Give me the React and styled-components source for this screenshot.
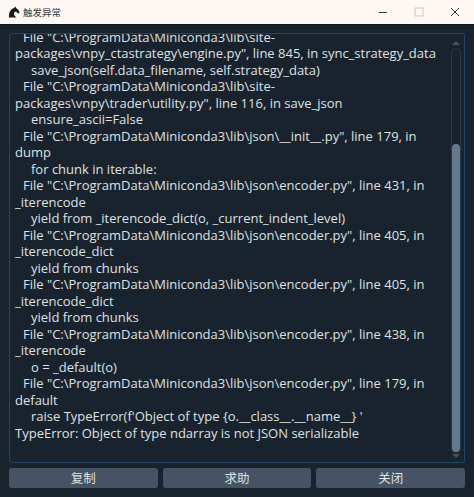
import React from 'react';
import styled, { createGlobalStyle } from 'styled-components';

const GlobalStyle = createGlobalStyle`
    html, body {
        margin: 0;
        padding: 0;
        background: #19232d;
    }
`;

const Window = styled.div`
    width: 474px;
    height: 497px;
    display: flex;
    flex-direction: column;
    background: #19232d;
    overflow: hidden;
`;

const TitleBar = styled.div`
    height: 24px;
    flex: none;
    display: flex;
    align-items: center;
    background: #fdf8f3;
    border-bottom: 1px solid #10161c;
    box-sizing: content-box;
    padding-left: 8px;
`;

const Title = styled.span`
    margin-left: 3px;
    font-family: "Noto Sans CJK SC", sans-serif;
    font-size: 9.5px;
    color: #333;
`;

const WinButtons = styled.div`
    margin-left: auto;
    display: flex;
    align-items: center;
    height: 100%;
    padding-right: 1px;
`;

const WinButton = styled.div`
    width: 36px;
    height: 24px;
    display: flex;
    align-items: center;
    justify-content: center;
`;

const Content = styled.div`
    flex: 1;
    min-height: 0;
    display: flex;
    flex-direction: column;
    gap: 5px;
    padding: 8px 9px 9px;
`;

const LogBox = styled.div`
    flex: 1;
    min-height: 0;
    display: flex;
    border: 1px solid #1f4766;
    border-radius: 3px;
    overflow: hidden;
`;

const LogText = styled.div`
    flex: 1;
    min-width: 0;
    margin-top: -5px;
    padding-left: 5px;
    font-family: "Open Sans", sans-serif;
    font-size: 13px;
    line-height: 16.48px;
    color: #dfe1e2;
    white-space: pre;
`;

const Line = styled.div`
    padding-left: ${p => p.$indent || 0}px;
`;

const ScrollBar = styled.div`
    width: 12px;
    flex: none;
    display: flex;
    flex-direction: column;
    align-items: center;
    padding: 7px 0 4px;
    margin-right: 2px;
`;

const Arrow = styled.div`
    width: 0;
    height: 0;
    flex: none;
    border-left: 4px solid transparent;
    border-right: 4px solid transparent;
    ${p => p.$down
        ? 'border-top: 4px solid #455364;'
        : 'border-bottom: 4px solid #455364;'}
`;

const Track = styled.div`
    flex: 1;
    width: 10px;
    margin: 3px 0 1px;
    display: flex;
    flex-direction: column;
    justify-content: flex-end;
    border: 1px solid #2b3a48;
    border-radius: 5px;
    box-sizing: border-box;
`;

const Thumb = styled.div`
    height: 308px;
    background: #60798b;
    border-radius: 4px;
`;

const ButtonRow = styled.div`
    flex: none;
    display: grid;
    grid-template-columns: repeat(3, 1fr);
    gap: 5px;
`;

const Button = styled.button`
    height: 20px;
    padding: 0;
    border: none;
    border-radius: 3px;
    background: #455364;
    color: #dfe1e2;
    font-family: "Noto Sans CJK SC", sans-serif;
    font-size: 12.5px;
    line-height: 20px;
`;

const lines = [
    ['File "C:\\ProgramData\\Miniconda3\\lib\\site-', 8],
    ['packages\\vnpy_ctastrategy\\engine.py", line 845, in sync_strategy_data', 0],
    ['save_json(self.data_filename, self.strategy_data)', 16],
    ['File "C:\\ProgramData\\Miniconda3\\lib\\site-', 8],
    ['packages\\vnpy\\trader\\utility.py", line 116, in save_json', 0],
    ['ensure_ascii=False', 16],
    ['File "C:\\ProgramData\\Miniconda3\\lib\\json\\__init__.py", line 179, in', 8],
    ['dump', 0],
    ['for chunk in iterable:', 16],
    ['File "C:\\ProgramData\\Miniconda3\\lib\\json\\encoder.py", line 431, in', 8],
    ['_iterencode', 0],
    ['yield from _iterencode_dict(o, _current_indent_level)', 16],
    ['File "C:\\ProgramData\\Miniconda3\\lib\\json\\encoder.py", line 405, in', 8],
    ['_iterencode_dict', 0],
    ['yield from chunks', 16],
    ['File "C:\\ProgramData\\Miniconda3\\lib\\json\\encoder.py", line 405, in', 8],
    ['_iterencode_dict', 0],
    ['yield from chunks', 16],
    ['File "C:\\ProgramData\\Miniconda3\\lib\\json\\encoder.py", line 438, in', 8],
    ['_iterencode', 0],
    ['o = _default(o)', 16],
    ['File "C:\\ProgramData\\Miniconda3\\lib\\json\\encoder.py", line 179, in', 8],
    ['default', 0],
    ["raise TypeError(f'Object of type {o.__class__.__name__} '", 16],
    ['TypeError: Object of type ndarray is not JSON serializable', 0],
];

const App = () => {
    return (
        <Window>
            <GlobalStyle />
            <TitleBar>
                <svg width="12" height="12" viewBox="0 0 12 12">
                    <path d="M1 11.5 C0.5 7 2.5 3 6 2 L7.5 0.5 L8 2 C10 3 11.5 5 11.5 7 L10 7.5 L8 5.5 L6 6.5 C5.5 8.5 6.5 10 8.5 11.5 Z" fill="#1a1a1a" />
                </svg>
                <Title>触发异常</Title>
                <WinButtons>
                    <WinButton>
                        <svg width="10" height="10" viewBox="0 0 10 10"><path d="M1 5.5 H9" stroke="#333" strokeWidth="1" /></svg>
                    </WinButton>
                    <WinButton>
                        <svg width="10" height="10" viewBox="0 0 10 10"><rect x="1" y="1" width="8" height="8" fill="none" stroke="#c9c6c3" strokeWidth="1" /></svg>
                    </WinButton>
                    <WinButton>
                        <svg width="10" height="10" viewBox="0 0 10 10"><path d="M1 1 L9 9 M9 1 L1 9" stroke="#333" strokeWidth="1" /></svg>
                    </WinButton>
                </WinButtons>
            </TitleBar>
            <Content>
                <LogBox>
                    <LogText>
                        {lines.map(([text, indent], index) => (
                            <Line key={index} $indent={indent}>{text}</Line>
                        ))}
                    </LogText>
                    <ScrollBar>
                        <Arrow />
                        <Track>
                            <Thumb />
                        </Track>
                        <Arrow $down />
                    </ScrollBar>
                </LogBox>
                <ButtonRow>
                    <Button>复制</Button>
                    <Button>求助</Button>
                    <Button>关闭</Button>
                </ButtonRow>
            </Content>
        </Window>
    );
};

export default App;
